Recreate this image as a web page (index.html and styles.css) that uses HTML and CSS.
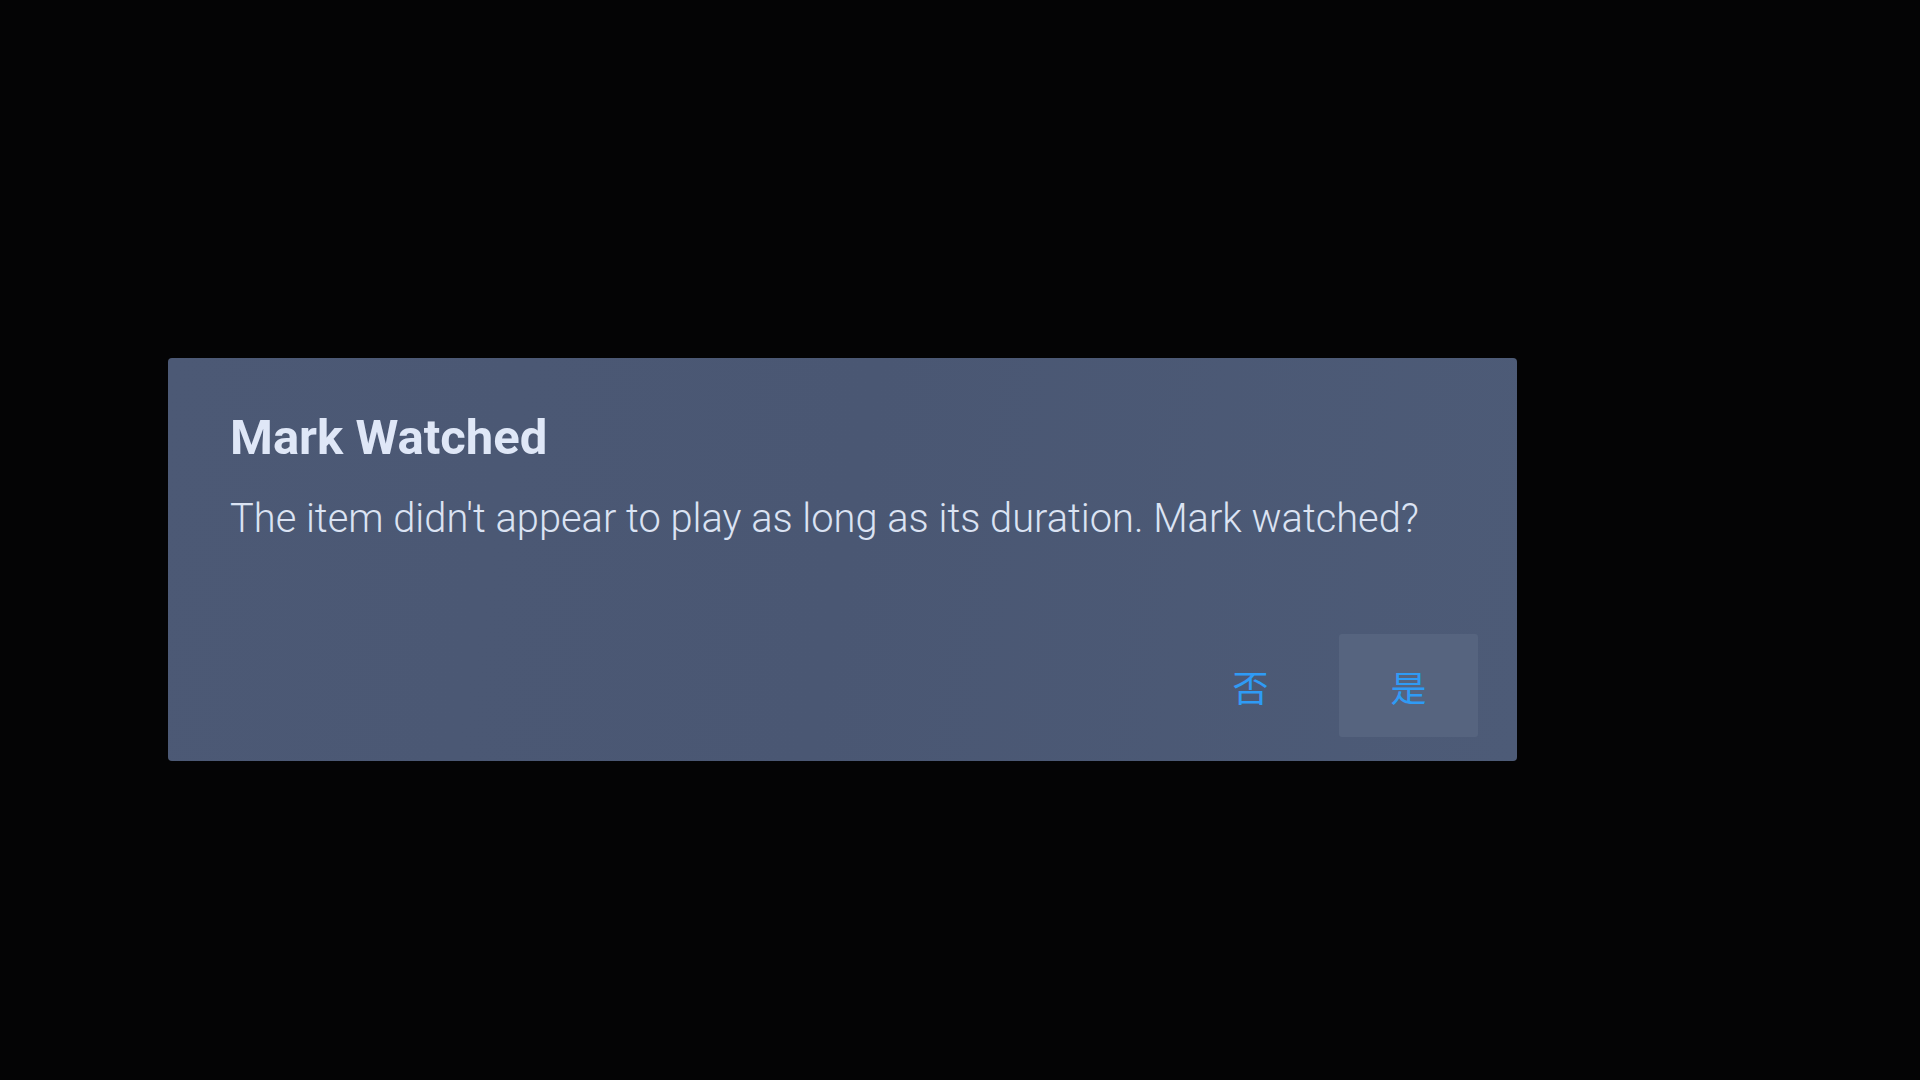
FILE: index.html
```html
<!DOCTYPE html>
<html lang="en">
<head>
    <meta charset="UTF-8">
    <meta name="viewport" content="width=device-width, initial-scale=1.0">
    <title>Mark Watched</title>
    <link rel="stylesheet" href="styles.css">
</head>
<body>
    <!-- Confirm dialog shown after playback stops early -->
    <div class="dialog">
        <h2 class="dialog-title">Mark Watched</h2>
        <p class="dialog-text">The item didn't appear to play as long as its duration. Mark watched?</p>
        <div class="dialog-buttons">
            <button class="dialog-button">否</button>
            <button class="dialog-button focused">是</button>
        </div>
    </div>
</body>
</html>
```

FILE: styles.css
```css
body {
    margin: 0;
    min-height: 1080px;
    background-color: #040405;
    font-family: Roboto, 'Noto Sans', sans-serif;
    padding: 358px 0 0 168px;
    box-sizing: border-box;
}

.dialog {
    width: 1349px;
    height: 403px;
    box-sizing: border-box;
    padding: 50px 39px 24px 62px;
    background: linear-gradient(100deg, #4c5975 0%, #4a5773 50%, #4d5b77 100%);
    border-radius: 4px;
    display: flex;
    flex-direction: column;
}

.dialog-title {
    margin: 0;
    font-size: 49px;
    line-height: 60px;
    font-weight: 700;
    color: #dfe7f7;
}

.dialog-text {
    margin: 27px 0 0;
    font-size: 39.8px;
    line-height: 48px;
    font-weight: 300;
    color: #dbe3f3;
}

/* Buttons sit at the bottom right */
.dialog-buttons {
    margin-top: auto;
    display: flex;
    justify-content: flex-end;
    gap: 19px;
}

.dialog-button {
    width: 139px;
    height: 103px;
    border: none;
    border-radius: 3px;
    background: transparent;
    color: #2f9bf5;
    font-family: 'Noto Sans CJK SC', sans-serif;
    font-size: 36px;
    cursor: pointer;
}

.dialog-button.focused {
    background-color: #56647f;
}
```
